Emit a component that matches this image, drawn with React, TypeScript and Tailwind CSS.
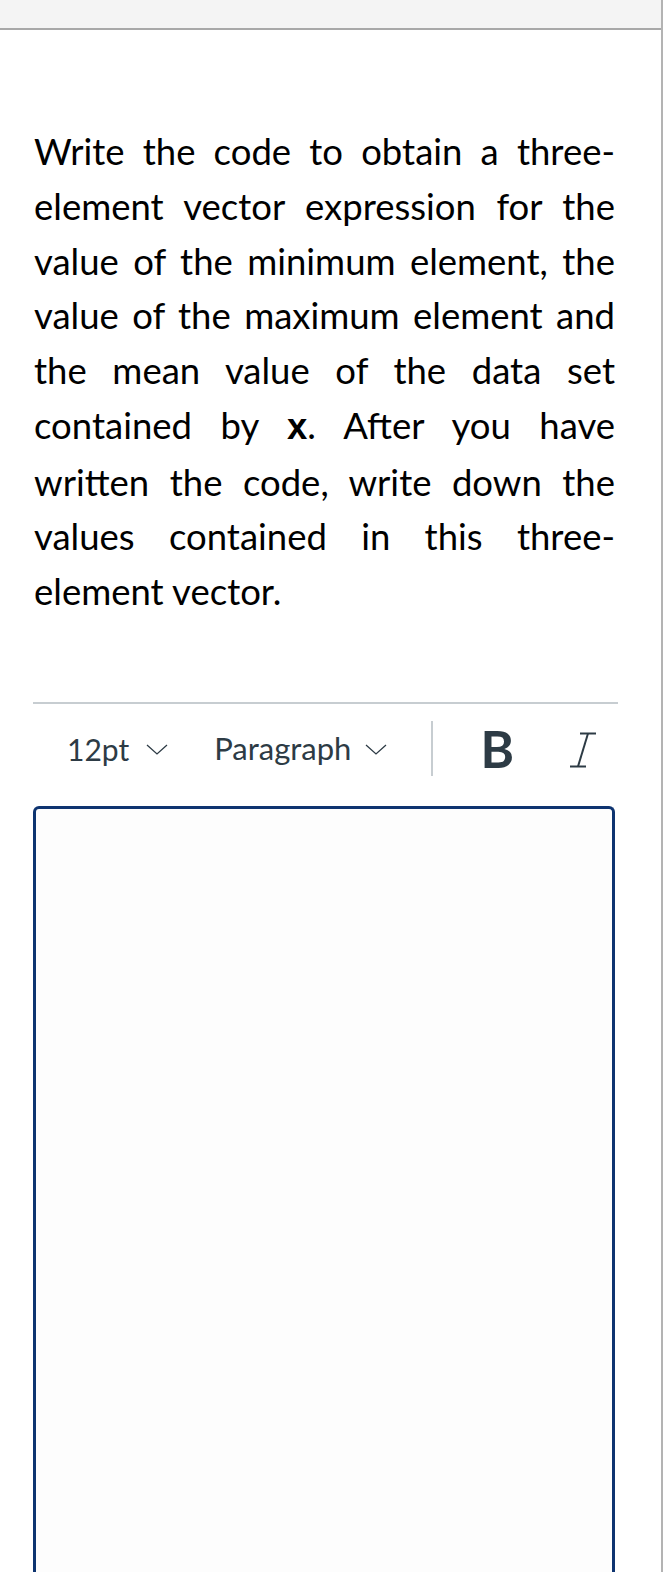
import React from "react";

function Chevron({ className }: { className?: string }) {
  return (
    <svg className={className} width="22" height="11" viewBox="0 0 22 11" fill="none">
      <path d="M1 1 L11 10 L21 1" stroke="#2d3b45" strokeWidth="1.3" />
    </svg>
  );
}

function ItalicIcon() {
  return (
    <svg width="26" height="36" viewBox="0 0 26 36" fill="none">
      <path d="M10 1.5 H26" stroke="#2d3b45" strokeWidth="2" />
      <path d="M0 34.5 H16" stroke="#2d3b45" strokeWidth="2" />
      <path d="M18 1.5 L8 34.5" stroke="#2d3b45" strokeWidth="2" />
    </svg>
  );
}

const lines: React.ReactNode[] = [
  "Write the code to obtain a three-",
  "element vector expression for the",
  "value of the minimum element, the",
  "value of the maximum element and",
  "the mean value of the data set",
  <>
    contained by <b className="font-bold" style={{ fontFamily: "'Liberation Sans', Arial, sans-serif" }}>x</b>. After you have
  </>,
  "written the code, write down the",
  "values contained in this three-",
];

export default function App() {
  return (
    <div className="w-[667px] h-[1572px] overflow-hidden bg-white flex" style={{ fontFamily: "Lato, 'Noto Sans', sans-serif" }}>
      <div className="w-[663px] flex flex-col border-r-2 border-[#b3b3b3]">
        <div className="h-[30px] bg-[#f4f4f4] border-b-2 border-[#a8a8a8] shrink-0" />
        <div className="pl-[34px] pr-[46px] pt-[94px] text-[36.5px] leading-[54.75px] text-black">
          {lines.map((l, i) => (
            <div key={i} className="text-justify [text-align-last:justify]">
              {l}
            </div>
          ))}
          <div>element vector.</div>
        </div>
        <div className="ml-[33px] w-[585px] mt-[83px] h-[2px] bg-[#c7cdd1]" />
        <div className="ml-[33px] w-[585px] h-[102px] pb-[12px] flex items-center text-[#2d3b45]">
          <span className="ml-[34px] text-[30px] leading-none">12pt</span>
          <Chevron className="ml-[17px] mt-[1px]" />
          <span className="ml-[46px] text-[31px] leading-none">Paragraph</span>
          <Chevron className="ml-[14px] mt-[1px]" />
          <div className="ml-[44px] w-[2px] h-[55px] bg-[#c7cdd1]" />
          <span className="ml-[47px] text-[51px] leading-none font-bold">B</span>
          <span className="ml-[56px] mt-[2px]"><ItalicIcon /></span>
        </div>
        <div className="ml-[33px] w-[582px] flex-1 border-[3px] border-b-0 border-[#0e3470] rounded-t-[6px] bg-[#fdfdfd]" />
      </div>
    </div>
  );
}
